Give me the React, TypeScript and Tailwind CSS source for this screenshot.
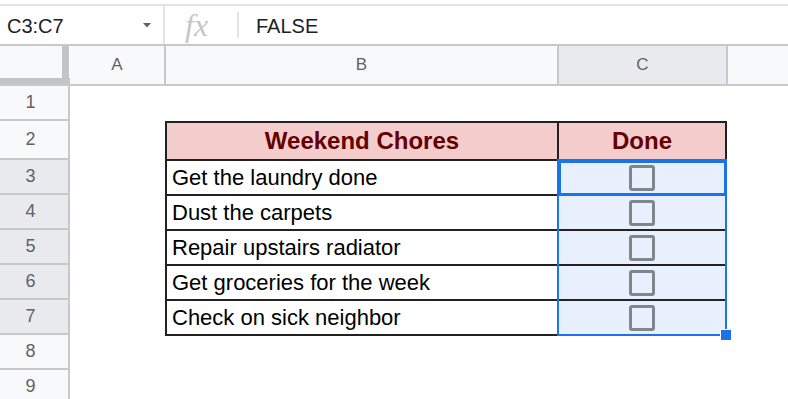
const chores = [
  'Get the laundry done',
  'Dust the carpets',
  'Repair upstairs radiator',
  'Get groceries for the week',
  'Check on sick neighbor',
];

const rowHeaders = [
  { n: 1, h: 'h-[35px]', sel: false },
  { n: 2, h: 'h-[39px]', sel: false },
  { n: 3, h: 'h-[35px]', sel: true },
  { n: 4, h: 'h-[35px]', sel: true },
  { n: 5, h: 'h-[35px]', sel: true },
  { n: 6, h: 'h-[35px]', sel: true },
  { n: 7, h: 'h-[35px]', sel: true },
  { n: 8, h: 'h-[35px]', sel: false },
  { n: 9, h: 'h-[35px]', sel: false },
];

function Checkbox() {
  return <div className="w-[26px] h-[26px] rounded-[3px] border-[3px] border-[#80868b]" />;
}

export default function App() {
  return (
    <div className="w-[788px] h-[399px] overflow-hidden bg-white font-['Liberation_Sans',Arial,sans-serif]">
      {/* top strip */}
      <div className="h-[6px] border-b-2 border-[#e2e2e2]" />

      {/* formula bar */}
      <div className="h-[40px] flex items-stretch border-b-2 border-[#c8c8c8]">
        <div className="w-[163px] flex items-center justify-between pl-[7px] pr-[12px] pt-[1px]">
          <span className="text-[20px] text-[#202124]">C3:C7</span>
          <svg width="8" height="5" viewBox="0 0 8 5">
            <polygon points="0,0 8,0 4,4.5" fill="#5f6368" />
          </svg>
        </div>
        <div className="w-[2px] bg-[#e3e3e3]" />
        <div className="w-[72px] flex items-center pl-[20px]">
          <span className="font-['Liberation_Serif',serif] italic text-[32px] leading-none text-[#c4c7c5]">fx</span>
        </div>
        <div className="w-[2px] my-[6px] bg-[#e3e3e3]" />
        <div className="flex items-center pl-[17px] pt-[1px]">
          <span className="text-[20px] text-[#202124]">FALSE</span>
        </div>
      </div>

      {/* column headers */}
      <div className="h-[40px] flex border-b-2 border-[#c8c8c8] bg-[#f8f9fa] text-[17px] text-[#5f6368]">
        <div className="w-[70px] flex flex-col">
          <div className="flex-1 flex">
            <div className="flex-1" />
            <div className="w-[7px] bg-[#c4c4c4]" />
            <div className="w-px bg-white" />
          </div>
          <div className="h-[6px] bg-[#c4c4c4]" />
        </div>
        <div className="w-[96px] flex items-center justify-center border-r-2 border-[#c8c8c8]">A</div>
        <div className="w-[393px] flex items-center justify-center border-r-2 border-[#c8c8c8]">B</div>
        <div className="w-[169px] flex items-center justify-center border-r-2 border-[#c8c8c8] bg-[#e8eaed]">C</div>
        <div className="flex-1" />
      </div>

      {/* body */}
      <div className="flex">
        <div className="w-[70px] border-r-2 border-[#c8c8c8] text-[18px] text-[#5f6368]">
          {rowHeaders.map((r) => (
            <div
              key={r.n}
              className={`${r.h} flex items-center justify-center pr-[7px] border-b-2 border-[#c8c8c8] ${r.sel ? 'bg-[#e8eaed]' : 'bg-[#f8f9fa]'}`}
            >
              {r.n}
            </div>
          ))}
        </div>

        <div className="pl-[95px] pt-[35px]">
          <div className="relative">
            <div className="w-[562px] border-2 border-[#222]">
              <div className="h-[38px] flex border-b-2 border-[#222] bg-[#f4cccc] text-[24px] font-bold text-[#660000]">
                <div className="w-[392px] flex items-center justify-center border-r-2 border-[#222]">Weekend Chores</div>
                <div className="flex-1 flex items-center justify-center">Done</div>
              </div>
              {chores.map((c, i) => (
                <div
                  key={c}
                  className={`flex text-[22px] text-black ${i < chores.length - 1 ? 'h-[35px] border-b-2 border-[#222]' : 'h-[33px]'}`}
                >
                  <div className="w-[392px] flex items-center pl-[5px] border-r-2 border-[#222]">{c}</div>
                  <div className="flex-1 flex items-center justify-center bg-[#e8f0fe]">
                    <Checkbox />
                  </div>
                </div>
              ))}
            </div>

            {/* selection range */}
            <div className="absolute left-[392px] top-[38px] w-[170px] h-[177px] border-2 border-[#1a73e8]" />
            {/* active cell */}
            <div className="absolute left-[393px] top-[39px] w-[169px] h-[36px] border-[3px] border-[#1a73e8]" />
            {/* fill handle */}
            <div className="absolute left-[555px] top-[208px] w-[12px] h-[12px] bg-[#1a73e8] border border-white" />
          </div>
        </div>
      </div>
    </div>
  );
}
